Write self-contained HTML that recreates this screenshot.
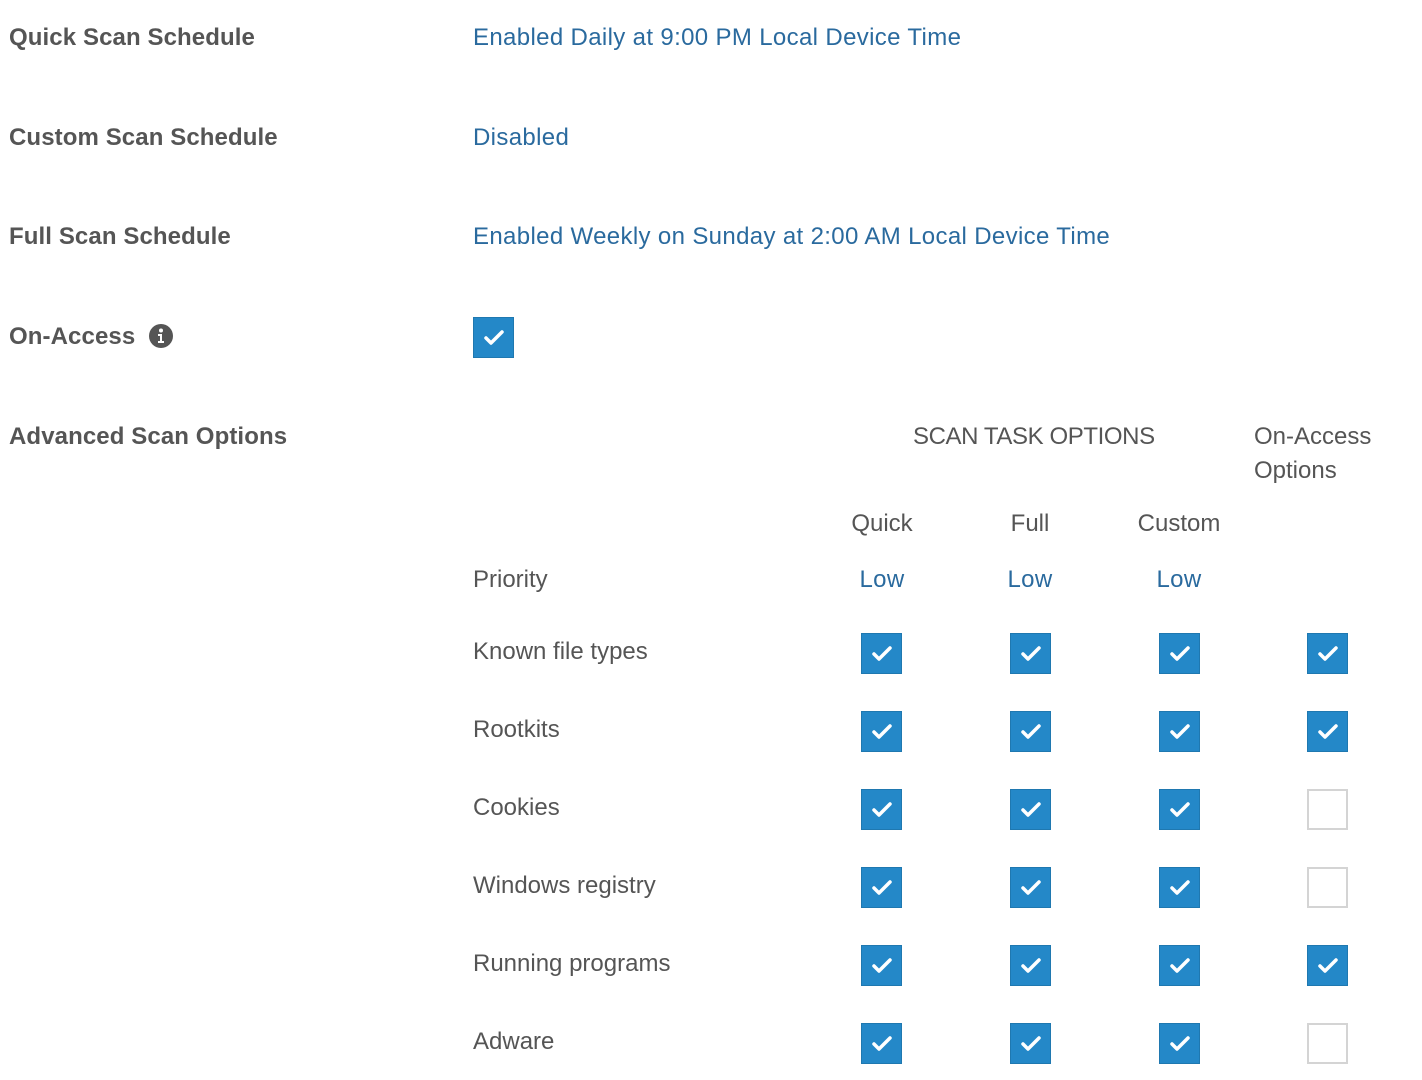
<!DOCTYPE html>
<html><head><meta charset="utf-8"><style>
body{margin:0;width:1422px;height:1080px;background:#fff;position:relative;overflow:hidden;font-family:"Liberation Sans",sans-serif}
.t{position:absolute;line-height:30px;white-space:nowrap;margin-top:1px}
.l{font-weight:bold;font-size:24px;color:#555;left:9px;letter-spacing:0.1px}
.v{font-size:24px;color:#2a6a9e;left:473px;letter-spacing:0.35px}
.g{font-size:24px;color:#555}
.c{position:absolute;width:41px;height:41px;box-sizing:border-box;background:#2488c8;border:1px solid #1f78b0}
.c svg{position:absolute;left:9px;top:11px}
.u{position:absolute;width:41px;height:41px;box-sizing:border-box;background:#fff;border:2px solid #d4d4d4}
.ctr{text-align:center;width:140px}
</style></head><body>
<div class="t l" style="top:22px">Quick Scan Schedule</div>
<div class="t v" style="top:22px">Enabled Daily at 9:00 PM Local Device Time</div>
<div class="t l" style="top:122px">Custom Scan Schedule</div>
<div class="t v" style="top:122px">Disabled</div>
<div class="t l" style="top:221px">Full Scan Schedule</div>
<div class="t v" style="top:221px">Enabled Weekly on Sunday at 2:00 AM Local Device Time</div>
<div class="t l" style="top:321px">On-Access</div>
<svg style="position:absolute;left:149px;top:324px" width="24" height="24" viewBox="0 0 24 24"><circle cx="12" cy="12" r="12" fill="#555"/><circle cx="12" cy="6.5" r="2" fill="#fff"/><path d="M9 10h4v7h2v2H9v-2h2v-5H9z" fill="#fff"/></svg>
<div class="t l" style="top:421px">Advanced Scan Options</div>

<div class="t g" style="top:421px;left:913px;letter-spacing:-0.4px">SCAN TASK OPTIONS</div>
<div class="t g" style="top:421px;left:1254px">On-Access</div>
<div class="t g" style="top:455px;left:1254px">Options</div>
<div class="t g ctr" style="top:508px;left:812px">Quick</div>
<div class="t g ctr" style="top:508px;left:960px">Full</div>
<div class="t g ctr" style="top:508px;left:1109px">Custom</div>
<div class="t g" style="top:564px;left:473px">Priority</div>
<div class="t v ctr" style="top:564px;left:812px">Low</div>
<div class="t v ctr" style="top:564px;left:960px">Low</div>
<div class="t v ctr" style="top:564px;left:1109px">Low</div>
<div class="t g" style="top:636px;left:473px">Known file types</div>
<div class="t g" style="top:714px;left:473px">Rootkits</div>
<div class="t g" style="top:792px;left:473px">Cookies</div>
<div class="t g" style="top:870px;left:473px">Windows registry</div>
<div class="t g" style="top:948px;left:473px">Running programs</div>
<div class="t g" style="top:1026px;left:473px">Adware</div>
<div id="boxes"></div>
<script>
var chk='<svg width="22" height="18" viewBox="0 0 22 18"><path d="M3 9l5 5L19 3" stroke="#fff" stroke-width="3.5" fill="none" stroke-linecap="round" stroke-linejoin="round"/></svg>';
var h='<div class="c" style="left:473px;top:317px">'+chk+'</div>';
var xs=[861,1010,1159,1307],ys=[633,711,789,867,945,1023],oa=[1,1,0,0,1,0];
for(var r=0;r<6;r++)for(var c=0;c<4;c++){var on=c<3||oa[r];h+=on?'<div class="c" style="left:'+xs[c]+'px;top:'+ys[r]+'px">'+chk+'</div>':'<div class="u" style="left:'+xs[c]+'px;top:'+ys[r]+'px"></div>';}
document.getElementById('boxes').innerHTML=h;
</script>
</body></html>
